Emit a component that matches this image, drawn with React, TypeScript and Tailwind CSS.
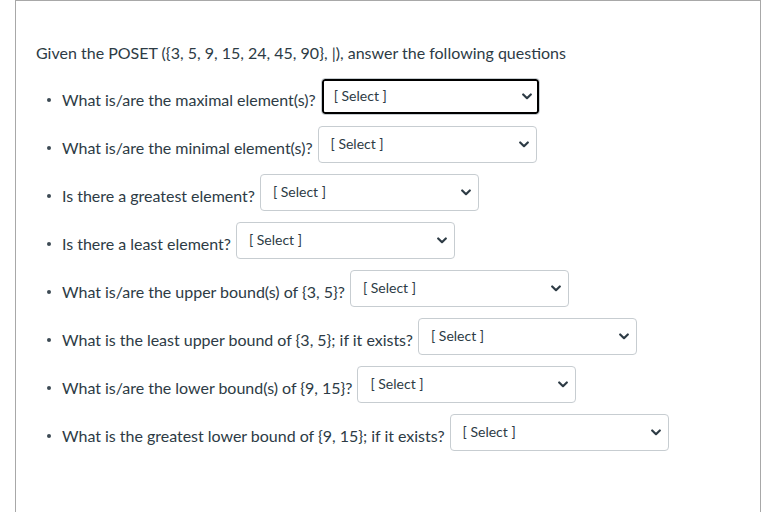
const questions = [
  "What is/are the maximal element(s)?",
  "What is/are the minimal element(s)?",
  "Is there a greatest element?",
  "Is there a least element?",
  "What is/are the upper bound(s) of {3, 5}?",
  "What is the least upper bound of {3, 5}; if it exists?",
  "What is/are the lower bound(s) of {9, 15}?",
  "What is the greatest lower bound of {9, 15}; if it exists?",
];

function Chevron() {
  return (
    <svg width="10" height="7" viewBox="0 0 10 7" className="shrink-0">
      <polyline points="1.2,1.5 5,5.2 8.8,1.5" fill="none" stroke="#2d3b45" strokeWidth="2.2" strokeLinecap="round" strokeLinejoin="round" />
    </svg>
  );
}

function FakeSelect({ focused }: { focused?: boolean }) {
  return (
    <div
      className={`ml-[5px] flex h-[37px] w-[219px] shrink-0 items-center justify-between rounded-[4px] border border-[#c7cdd1] bg-white pl-[12px] pr-[7px] ${
        focused ? "shadow-[inset_0_0_0_2px_#000]" : ""
      }`}
    >
      <span className="pb-[3px] text-[14px] text-[#2d3b45]">[ Select ]</span>
      <Chevron />
    </div>
  );
}

export default function App() {
  return (
    <div className="h-[512px] w-[762px] overflow-hidden bg-white" style={{ fontFamily: "Lato, 'Open Sans', sans-serif" }}>
      <div className="ml-[15px] h-[520px] w-[746px] border-x border-t border-[#a8a8a8] pl-[20px] pt-[40px]">
        <p className="text-[16px] leading-[24px] text-[#2d3b45]">
          Given the POSET ({"{"}3, 5, 9, 15, 24, 45, 90{"}"}, |), answer the following questions
        </p>

        <ul className="mt-[13px] flex flex-col gap-[11px]">
          {questions.map((q, i) => (
            <li key={q} className="flex h-[37px] items-center">
              <span className="ml-[11px] mt-[6px] h-[4px] w-[4px] shrink-0 rounded-full bg-[#3d4a54]" />
              <span className="ml-[11px] mt-[6px] whitespace-nowrap text-[16px] leading-[24px] tracking-[-0.02px] text-[#2d3b45]">{q}</span>
              <FakeSelect focused={i === 0} />
            </li>
          ))}
        </ul>
      </div>
    </div>
  );
}
